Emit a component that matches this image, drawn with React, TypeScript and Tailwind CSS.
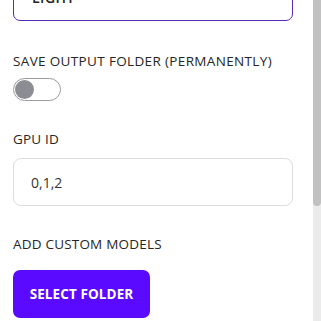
import React from "react";

export default function App() {
  return (
    <div className="flex w-[321px] h-[321px] overflow-hidden bg-white" style={{ fontFamily: '"Open Sans", "Liberation Sans", sans-serif' }}>
      <div className="flex-1 min-w-0 pl-[13px] pr-[20px]">
        <div className="mt-[-27px] h-[48px] rounded-[7px] border-[1.5px] border-[#5b2bb5] flex items-center justify-between pl-[18px] pr-[14px]">
          <span className="text-[14px] font-semibold text-[#222] tracking-[0.5px]">LIGHT</span>
          <svg width="12" height="8" viewBox="0 0 12 8" fill="none" stroke="#333" strokeWidth="1.3" className="mb-[2px]">
            <path d="M1 1.5 L6 6.5 L11 1.5" />
          </svg>
        </div>
        <div className="mt-[30px] h-[20px] leading-[20px] text-[13.5px] text-[#262626] tracking-[0.35px] whitespace-nowrap">SAVE OUTPUT FOLDER (PERMANENTLY)</div>
        <button className="mt-[7px] block w-[48px] h-[23px] rounded-full border border-[#9a9aa0] bg-white relative">
          <span className="absolute left-[1px] top-[1px] w-[19px] h-[19px] rounded-full bg-[#8c8c94]" />
        </button>
        <div className="mt-[28px] h-[20px] leading-[20px] text-[13.5px] text-[#262626] tracking-[0.2px]">GPU ID</div>
        <div className="mt-[9px] h-[48px] rounded-[8px] border border-[#dcdcdc] flex items-center pl-[17px] text-[14px] text-[#333]">0,1,2</div>
        <div className="mt-[28px] h-[20px] leading-[20px] text-[13.5px] text-[#262626] tracking-[0.2px]">ADD CUSTOM MODELS</div>
        <button className="mt-[16px] w-[137px] h-[48px] rounded-[7px] bg-[#5a0bff] text-white text-[13.5px] font-bold tracking-[0.1px]">SELECT FOLDER</button>
      </div>
      <div className="w-[8px] bg-[#ebebeb] flex flex-col">
        <div className="h-[206px] bg-[#c1c1c1] rounded-b-[4px]" />
      </div>
    </div>
  );
}
